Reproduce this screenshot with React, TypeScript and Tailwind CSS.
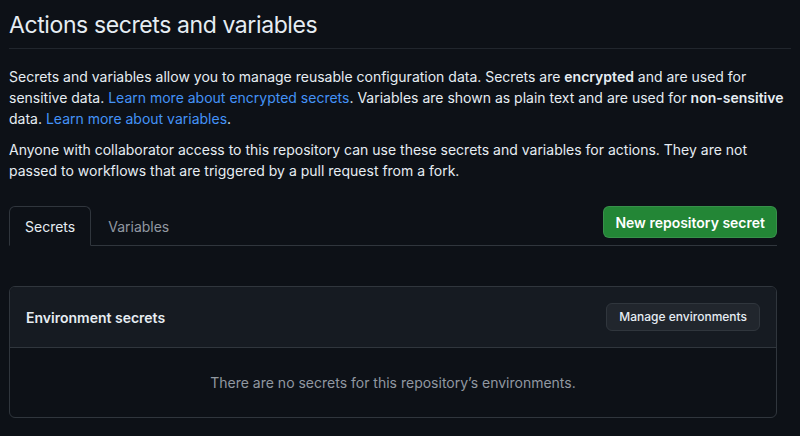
import React from 'react';

const FONT = { fontFamily: 'Inter, "Noto Sans", "Liberation Sans", sans-serif' };

export default function App() {
  return (
    <div className="min-h-[436px] bg-[#0d1117] text-[#e6edf3] px-[9px] pt-[10px]" style={FONT}>
      {/* Subhead */}
      <div className="border-b border-[#21262d] pb-[8px]">
        <h2 className="text-[23px] leading-[30px] font-normal tracking-[-0.4px]">Actions secrets and variables</h2>
      </div>

      <p className="mt-[17px] text-[14px] leading-[21px]">
        Secrets and variables allow you to manage reusable configuration data. Secrets are{' '}
        <b className="font-semibold">encrypted</b> and are used for sensitive data.{' '}
        <a className="text-[#4493f8]">Learn more about encrypted secrets</a>. Variables are shown as plain text and
        are used for <b className="font-semibold">non-sensitive</b> data.{' '}
        <a className="text-[#4493f8]">Learn more about variables</a>.
      </p>
      <p className="mt-[10px] text-[14px] leading-[21px]">
        Anyone with collaborator access to this repository can use these secrets and variables for actions. They are
        not passed to workflows that are triggered by a pull request from a fork.
      </p>

      {/* Tabs */}
      <div className="mt-[25px] flex items-end justify-between border-b border-[#30363d] w-[768px]">
        <div className="flex items-end -mb-px">
          <div className="h-[40px] px-[15px] flex items-center text-[14px] text-[#e6edf3] border border-[#30363d] border-b-[#0d1117] rounded-t-[6px] bg-[#0d1117]">
            Secrets
          </div>
          <div className="h-[40px] px-[17px] flex items-center text-[14px] text-[#9198a1]">Variables</div>
        </div>
        <button className="mb-[7px] h-[32px] px-[11px] rounded-[6px] bg-[#238636] border border-[rgba(240,246,252,0.1)] text-white text-[14px] font-semibold">
          New repository secret
        </button>
      </div>

      {/* Environment secrets box */}
      <div className="mt-[40px] w-[768px] border border-[#30363d] rounded-[6px] overflow-hidden">
        <div className="h-[61px] bg-[#161b22] border-b border-[#30363d] flex items-center justify-between px-[16px]">
          <span className="text-[14px] font-semibold">Environment secrets</span>
          <button className="h-[28px] px-[12px] rounded-[6px] bg-[#21262d] border border-[#30363d] text-[12px] font-medium text-[#e6edf3]">
            Manage environments
          </button>
        </div>
        <div className="h-[69px] flex items-center justify-center text-[14px] text-[#9198a1]">
          There are no secrets for this repository’s environments.
        </div>
      </div>
    </div>
  );
}
